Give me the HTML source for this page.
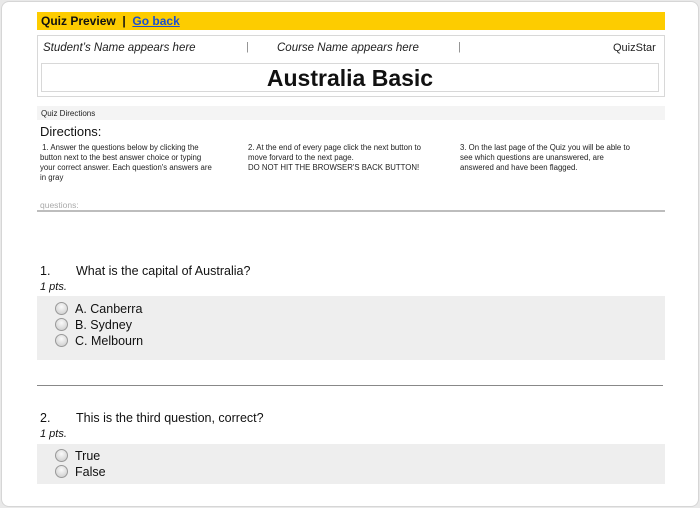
<!DOCTYPE html>
<html><head><style>
*{margin:0;padding:0;box-sizing:border-box}
body{width:700px;height:508px;background:#e9e9e9;font-family:"Liberation Sans",sans-serif;color:#111;position:relative;overflow:hidden}
.card{position:absolute;left:1px;top:1px;width:698px;height:506px;background:#fff;border:1px solid #d6d6d6;border-radius:8px}
.a{position:absolute;white-space:nowrap}
.bar{left:37px;top:12px;width:628px;height:18px;background:#fdcc00;font-size:12px;font-weight:bold;padding:2px 4px;line-height:15px}
.bar a{color:#1a4fd0;text-decoration:underline}
.hdr{left:37px;top:35px;width:628px;height:62px;border:1px solid #d8d8d8}
.ttl{left:41px;top:63px;width:618px;height:29px;border:1px solid #d8d8d8;text-align:center;font-size:23px;font-weight:bold;line-height:28px}
.it{font-style:italic;font-size:11.5px;color:#222}
.qd{left:37px;top:106px;width:628px;height:14px;background:#f4f4f4;font-size:8px;padding:3px 4px;color:#222}
.sm{font-size:7.8px;line-height:10px;color:#222;white-space:normal;width:176px}
.box{background:#eeeeee;left:37px;width:628px}
.rad{display:inline-block;width:13px;height:13px;border-radius:50%;background:radial-gradient(circle at 50% 35%,#fafafa,#c8c8c8);border:1px solid #999;vertical-align:-2px;margin-right:7px}
.opt{font-size:12.5px;left:55px}
</style></head><body>
<div class="card"></div>
<div class="a bar">Quiz Preview &nbsp;|&nbsp; <a>Go back</a></div>
<div class="a hdr"></div>
<div class="a it" style="left:43px;top:42px">Student’s Name appears here</div>
<div class="a" style="left:246px;top:41px;font-size:11px;color:#888">|</div>
<div class="a it" style="left:277px;top:42px">Course Name appears here</div>
<div class="a" style="left:458px;top:41px;font-size:11px;color:#888">|</div>
<div class="a" style="left:613px;top:42px;font-size:11px;color:#222">QuizStar</div>
<div class="a ttl">Australia Basic</div>
<div class="a qd">Quiz Directions</div>
<div class="a" style="left:40px;top:124px;font-size:13px">Directions:</div>
<div class="a sm" style="left:40px;top:143px">&nbsp;1. Answer the questions below by clicking the button next to the best answer choice or typing your correct answer. Each question's answers are in gray</div>
<div class="a sm" style="left:248px;top:143px;width:190px">2. At the end of every page click the next button to move forvard to the next page.<br>DO NOT HIT THE BROWSER'S BACK BUTTON!</div>
<div class="a sm" style="left:460px;top:143px">3. On the last page of the Quiz you will be able to see which questions are unanswered, are answered and have been flagged.</div>
<div class="a" style="left:40px;top:200px;font-size:8.5px;color:#aaa">questions:</div>
<div class="a" style="left:37px;top:210px;width:628px;height:2px;background:#bdbdbd"></div>
<div class="a" style="left:40px;top:264px;font-size:12.5px">1.</div>
<div class="a" style="left:76px;top:264px;font-size:12.5px">What is the capital of Australia?</div>
<div class="a" style="left:40px;top:281px;font-size:11px;font-style:italic">1 pts.</div>
<div class="a box" style="top:296px;height:64px"></div>
<div class="a opt" style="top:302px"><span class="rad"></span>A. Canberra</div>
<div class="a opt" style="top:318px"><span class="rad"></span>B. Sydney</div>
<div class="a opt" style="top:334px"><span class="rad"></span>C. Melbourn</div>
<div class="a" style="left:37px;top:385px;width:626px;height:1px;background:#888"></div>
<div class="a" style="left:40px;top:411px;font-size:12.5px">2.</div>
<div class="a" style="left:76px;top:411px;font-size:12.5px">This is the third question, correct?</div>
<div class="a" style="left:40px;top:428px;font-size:11px;font-style:italic">1 pts.</div>
<div class="a box" style="top:444px;height:40px"></div>
<div class="a opt" style="top:449px"><span class="rad"></span>True</div>
<div class="a opt" style="top:465px"><span class="rad"></span>False</div>
</body></html>
